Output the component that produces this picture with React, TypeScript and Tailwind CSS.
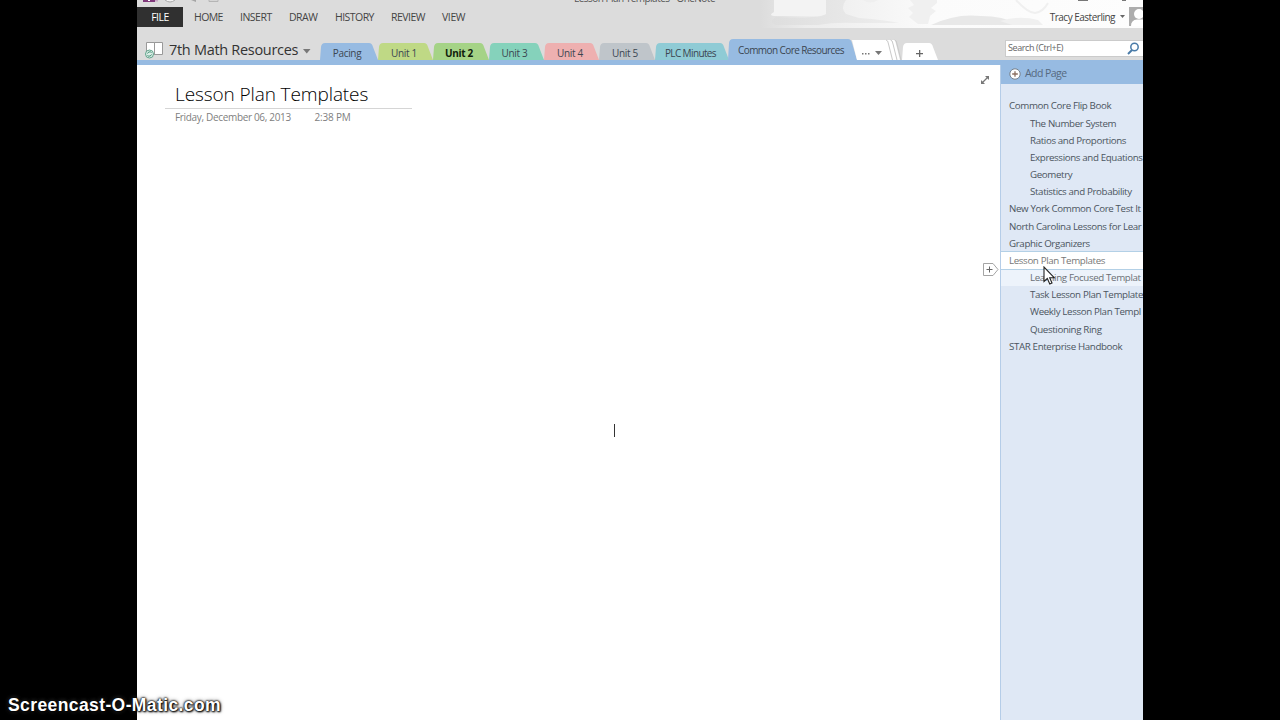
import { ReactNode } from "react"
import clsx from "clsx"

const menuItems = [
  { label: "HOME", className: "w-[46px] tracking-[-0.6px]" },
  { label: "INSERT", className: "w-[49px] tracking-[-0.5px]" },
  { label: "DRAW", className: "w-[46px] tracking-[-0.5px]" },
  { label: "HISTORY", className: "w-[56px] tracking-[-0.55px]" },
  { label: "REVIEW", className: "w-[51px] tracking-[-0.5px]" },
  { label: "VIEW", className: "w-[42px] tracking-[-0.4px]" },
]

const sections = [
  { label: "Pacing", color: "#97bbe2", width: 58, text: "pr-[4px]" },
  { label: "Unit 1", color: "#bfd985", width: 55, text: "pr-[3px]" },
  { label: "Unit 2", color: "#a5d386", width: 56, text: "pr-[4px] font-bold text-[#10200c]" },
  { label: "Unit 3", color: "#85d2bb", width: 55, text: "pr-[4px]" },
  { label: "Unit 4", color: "#eeb0b0", width: 55, text: "pr-[3px]" },
  { label: "Unit 5", color: "#bfc5ca", width: 56, text: "pr-[4px]" },
  { label: "PLC Minutes", color: "#8fcbd5", width: 74, text: "pr-[3px] tracking-[-0.62px]" },
]

const pages = [
  { title: "Common Core Flip Book", level: 0 },
  { title: "The Number System", level: 1 },
  { title: "Ratios and Proportions", level: 1 },
  { title: "Expressions and Equations", level: 1 },
  { title: "Geometry", level: 1 },
  { title: "Statistics and Probability", level: 1 },
  { title: "New York Common Core Test It", level: 0 },
  { title: "North Carolina Lessons for Lear", level: 0 },
  { title: "Graphic Organizers", level: 0 },
  { title: "Lesson Plan Templates", level: 0, selected: true },
  { title: "Learning Focused Templat", level: 1, hovered: true },
  { title: "Task Lesson Plan Template", level: 1 },
  { title: "Weekly Lesson Plan Templ", level: 1 },
  { title: "Questioning Ring", level: 1 },
  { title: "STAR Enterprise Handbook", level: 0 },
]

function TabShape({ width, height, color }: { width: number; height: number; color: string }) {
  const w = width
  const h = height
  return (
    <svg width={w} height={h} className="[grid-area:1/1]">
      <path
        d={`M0 ${h} L1 4 Q1.500 0 5 0 H${w - 9} Q${w - 6} 0 ${w - 5} 4 L${w} ${h} Z`}
        fill={color}
      />
    </svg>
  )
}

function SectionTab({ width, color, text, children }: { width: number; color: string; text?: string; children: ReactNode }) {
  return (
    <div className="grid h-[17px] shrink-0">
      <TabShape width={width} height={17} color={color} />
      <span className={clsx("flex items-center justify-center whitespace-nowrap pt-[3px] [grid-area:1/1]", text)}>{children}</span>
    </div>
  )
}

function TitleBar() {
  return (
    <div className="flex h-[7px] items-start overflow-hidden">
      <svg width="90" height="7" className="ml-[6px]">
        <path d="M0 0h12v2H0z" fill="#80397b" />
        <path d="M5 0h2v1H5z" fill="#fff" />
        <path d="M12 0h3v1.500h-3z" fill="#c9a7c7" />
        <path d="M22 0q5 4 10 0" fill="#f3f3f3" stroke="#a9a9a9" />
        <path d="M48 0l5 2v-2" fill="#a5a5a5" />
        <path d="M66 0h9v1.500h-9z" fill="#f5f5f5" stroke="#b5b5b5" />
      </svg>
      <span className="-mt-[9px] ml-[341px] whitespace-nowrap text-[10px] leading-[15px] tracking-[-0.52px] text-[#555]">
        Lesson Plan Templates - OneNote
      </span>
    </div>
  )
}

// Faded paper-and-clouds drawing behind the account name
function HeaderArt() {
  return (
    <svg width="383" height="28" className="absolute right-0 top-0">
      <defs>
        <linearGradient id="artFade" x1="0" x2="1" y1="0" y2="0">
          <stop offset="0" stopColor="#dcdcdc" />
          <stop offset="0.12" stopColor="#ececec" />
          <stop offset="0.45" stopColor="#fbfbfb" />
          <stop offset="1" stopColor="#fdfdfd" />
        </linearGradient>
        <linearGradient id="shade" x1="0" x2="1" y1="0" y2="0">
          <stop offset="0" stopColor="#dedede" />
          <stop offset="1" stopColor="#eeeeee" />
        </linearGradient>
      </defs>
      <path d="M0 28V0H383V28Z" fill="url(#artFade)" />
      <path d="M14 0H66V13Q68 16 58 16H14Q8 15 14 12Z" fill="#f3f3f3" />
      <path d="M66 0H86Q80 8 86 14L99 18Q125 20 139 23H95Q75 22 58 25H16Q8 22 16 17Q60 19 66 14Z" fill="url(#shade)" />
      <path d="M103 0Q110 5 118 0Z" fill="#efefef" />
      <path d="M150 0L154 5L148 8L153 13L149 17L158 24H168L170 16L176 11L171 8L177 3V0Z" fill="#f0f0f0" />
      <path d="M171 25Q196 13 221 16Q244 16 259 25Z" fill="#e8e8e8" />
      <path d="M240 21Q260 15 278 20L283 25H252Z" fill="#f0f0f0" />
      <path d="M256 0Q268 13 275 13Q283 12 288 3" fill="none" stroke="#f0f0f0" strokeWidth="2" />
      <path d="M318 0h10v1h-10zM362 0h4v1h-4z" fill="#777" />
    </svg>
  )
}

function Ribbon() {
  return (
    <div className="relative z-10 flex h-5 items-center text-[10.500px] text-[#444]">
      <div className="flex h-5 w-[46px] items-center justify-center bg-[#303030] pt-px tracking-[-0.5px] text-white">FILE</div>
      <div className="ml-[11px] flex pt-[2px]">
        {menuItems.map((item) => (
          <span key={item.label} className={clsx("whitespace-nowrap", item.className)}>{item.label}</span>
        ))}
      </div>
      <div className="ml-auto flex items-center">
        <span className="whitespace-nowrap text-[10px] tracking-[-0.5px]">Tracy Easterling</span>
        <svg width="5" height="4" className="ml-[5px]">
          <path d="M0 0h5L2.500 3z" fill="#666" />
        </svg>
        <svg width="14" height="20" className="ml-[4px]">
          <path d="M0 0h14v19H0z" fill="#adadad" />
          <circle cx="10" cy="7" r="5" fill="#fff" />
          <path d="M2 19Q2 13 8 12.500H14V19Z" fill="#fff" />
        </svg>
      </div>
    </div>
  )
}

function NotebookBar() {
  return (
    <div className="flex h-[33px] items-end text-[10px] tracking-[-0.3px] text-[#3b4651]">
      <div className="flex h-[21px] w-[183px] shrink-0 items-center pl-[8px]">
        <svg width="20" height="20" className="mt-[1px] shrink-0">
          <path d="M1.500 2.500h8v12h-8zM9.500 2.500h8v12h-8z" fill="#fff" stroke="#999" />
          <circle cx="4.500" cy="14" r="4" fill="#dceee7" stroke="#62a48c" />
          <path d="M2.500 13.500a2.500 2.500 0 0 1 4-1M6.500 14.500a2.500 2.500 0 0 1-4 1" fill="none" stroke="#378a6d" />
        </svg>
        <span className="ml-[4px] whitespace-nowrap text-[14.500px] text-[#333]">7th Math Resources</span>
        <svg width="8" height="5" className="ml-auto mr-[9px] mt-[4px]">
          <path d="M0 0h7.500L3.750 4.500z" fill="#777" />
        </svg>
      </div>
      {sections.map((section) => (
        <SectionTab key={section.label} width={section.width} color={section.color} text={section.text}>
          {section.label}
        </SectionTab>
      ))}
      <div className="-ml-[1px] grid h-[21px] shrink-0">
        <TabShape width={129} height={21} color="#97bbe2" />
        <span className="flex justify-center whitespace-nowrap pr-[3px] pt-[3px] leading-[16px] tracking-[-0.58px] [grid-area:1/1]">
          Common Core Resources
        </span>
      </div>
      <svg width="50" height="21" className="-ml-[5px] shrink-0">
        <path d="M0 1h43l5 20H5z" fill="#fff" />
        <path d="M34 1q2 0 2.500 4l4 16M38.500 1q2 0 2.500 4l4 16M42.500 1q2 0 2.500 4l4 16" fill="none" stroke="#c9c9c9" />
        <path d="M10 14h1.500v1.500H10zM13 14h1.500v1.500H13zM16 14h1.500v1.500H16z" fill="#777" />
        <path d="M23 12h7l-3.500 4z" fill="#777" />
      </svg>
      <SectionTab width={36} color="#fff" text="pr-px">
        <svg width="7" height="7">
          <path d="M3 0h1.300v3H7v1.300H4.300V7H3V4.300H0V3h3z" fill="#666" />
        </svg>
      </SectionTab>
      <div className="mb-[3px] ml-auto flex h-[17px] w-[138px] shrink-0 items-center border border-r-0 border-[#cbcbcb] bg-white pl-[2px] text-[9px] text-[#666]">
        <span className="-mt-px whitespace-nowrap tracking-[-0.4px]">Search (Ctrl+E)</span>
        <svg width="13" height="13" className="ml-auto mr-[3px]">
          <circle cx="7.500" cy="5" r="3.700" fill="none" stroke="#4a7ba8" strokeWidth="1.500" />
          <path d="M5 8L1 12" stroke="#4a7ba8" strokeWidth="2" />
        </svg>
      </div>
    </div>
  )
}

function PageCanvas() {
  return (
    <main className="relative flex-1 bg-white">
      <div className="ml-[28px] mt-[17px] w-[247px] border-b border-[#d5d5d5] pb-px pl-[10px]">
        <h1 className="whitespace-nowrap text-[19px] font-light leading-[25px] tracking-[-0.1px] text-black">Lesson Plan Templates</h1>
      </div>
      <div className="ml-[38px] flex pt-px text-[10px] leading-[15px] tracking-[-0.33px] text-[#808080]">
        <span className="w-[139.500px]">Friday, December 06, 2013</span>
        <span className="tracking-[-0.2px]">2:38 PM</span>
      </div>
      <svg width="10" height="10" className="absolute right-[10px] top-[10px]">
        <path d="M5 1H9v4zM1 5V9h4z" fill="#777" />
        <path d="M2 8L8 2" stroke="#777" strokeWidth="1.300" />
      </svg>
      {/* insert-page marker */}
      <svg width="16" height="14" className="absolute right-[1px] top-[198px]">
        <path d="M.5 .5H10L15 6.500L10 12.500H.5Z" fill="#fff" stroke="#a5a5a5" />
        <path d="M6.500 3.500v6M3.500 6.500h6" stroke="#666" />
      </svg>
      <div className="absolute left-[477px] top-[359px] h-[13px] w-px bg-[#333]" />
    </main>
  )
}

function PageList() {
  return (
    <aside className="-mt-1 w-[143px] shrink-0 overflow-hidden border-l border-[#b5cde8] bg-[#dfe8f5]">
      <div className="flex h-[23px] items-center bg-[#97bbe2] pl-[8px] pt-[2px] text-[10.500px] tracking-[-0.55px] text-[#56697f]">
        <svg width="12" height="12">
          <circle cx="6" cy="6" r="5.200" fill="#fff" stroke="#76818d" />
          <path d="M6 3.200v5.600M3.200 6h5.600" stroke="#8a6f60" strokeWidth="1.300" />
        </svg>
        <span className="ml-[4px]">Add Page</span>
      </div>
      <ul className="pt-[13.400px] text-[9.750px] leading-[17.180px] tracking-[-0.37px] text-[#4c5560]">
        {pages.map((page) => (
          <li
            key={page.title}
            className={clsx(
              "h-[17.180px] whitespace-nowrap",
              page.level === 1 ? "pl-[29px]" : "pl-[8px]",
              page.selected && "bg-white text-[#777] outline outline-[#b3d0e6]",
              page.hovered && "bg-[#edf3fb] text-[#6b6f75]",
            )}
          >
            {page.title}
          </li>
        ))}
      </ul>
    </aside>
  )
}

export default function App() {
  return (
    <div className="relative flex h-[720px] w-[1280px] justify-center overflow-hidden bg-black font-['Open_Sans','Noto_Sans',sans-serif]">
      <div className="flex w-[1006px] flex-col bg-[#dcdcdc]">
        <header className="relative shrink-0">
          <HeaderArt />
          <TitleBar />
          <Ribbon />
          <NotebookBar />
          <div className="h-[5px] bg-[#97bbe2]" />
        </header>
        <div className="flex flex-1">
          <PageCanvas />
          <PageList />
        </div>
      </div>

      <svg width="13" height="20" className="absolute left-[1043px] top-[266px]">
        <path d="M1 1V15.500L4.300 12.500L6.800 18L9 17L6.700 11.700H11.200Z" fill="#fff" stroke="#222" strokeWidth="1.100" />
      </svg>
      <div className="absolute bottom-[4px] left-[8px] whitespace-nowrap font-['Liberation_Sans',Arial,sans-serif] text-[17.500px] font-bold leading-[22px] tracking-[0.4px] text-white [text-shadow:0_0_2px_#000,0_0_2px_#000,1px_1px_2px_#000,0_0_4px_#555]">
        Screencast-O-Matic.com
      </div>
    </div>
  )
}
